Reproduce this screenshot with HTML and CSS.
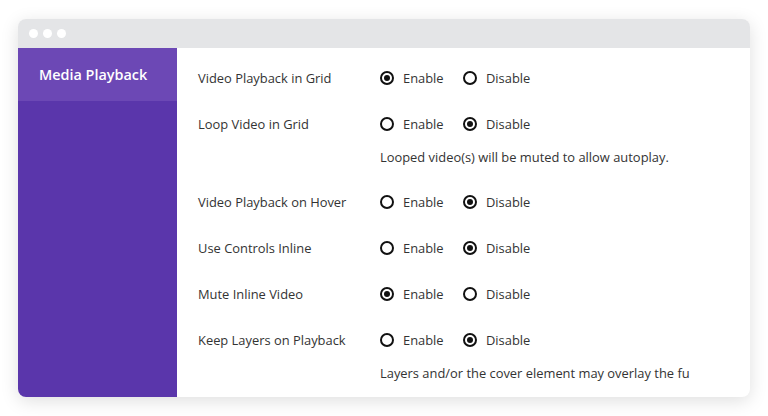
FILE: index.html
```html
<!DOCTYPE html>
<html>
<head>
<meta charset="utf-8">
<link rel="stylesheet" href="styles.css">
</head>
<body>
<div class="window">
  <div class="titlebar">
    <span class="dot"></span><span class="dot"></span><span class="dot"></span>
  </div>
  <div class="main">
    <div class="sidebar">
      <div class="nav-item active">Media Playback</div>
    </div>
    <div class="content">
      <div class="row">
        <div class="label">Video Playback in Grid</div>
        <div class="options">
          <div class="opt"><span class="radio on"></span>Enable</div>
          <div class="opt"><span class="radio"></span>Disable</div>
        </div>
      </div>
      <div class="row">
        <div class="label">Loop Video in Grid</div>
        <div class="options">
          <div class="opt"><span class="radio"></span>Enable</div>
          <div class="opt"><span class="radio on"></span>Disable</div>
        </div>
      </div>
      <div class="note">Looped video(s) will be muted to allow autoplay.</div>
      <div class="row">
        <div class="label">Video Playback on Hover</div>
        <div class="options">
          <div class="opt"><span class="radio"></span>Enable</div>
          <div class="opt"><span class="radio on"></span>Disable</div>
        </div>
      </div>
      <div class="row">
        <div class="label">Use Controls Inline</div>
        <div class="options">
          <div class="opt"><span class="radio"></span>Enable</div>
          <div class="opt"><span class="radio on"></span>Disable</div>
        </div>
      </div>
      <div class="row">
        <div class="label">Mute Inline Video</div>
        <div class="options">
          <div class="opt"><span class="radio on"></span>Enable</div>
          <div class="opt"><span class="radio"></span>Disable</div>
        </div>
      </div>
      <div class="row">
        <div class="label">Keep Layers on Playback</div>
        <div class="options">
          <div class="opt"><span class="radio"></span>Enable</div>
          <div class="opt"><span class="radio on"></span>Disable</div>
        </div>
      </div>
      <div class="note last">Layers and/or the cover element may overlay the fu</div>
    </div>
  </div>
</div>
</body>
</html>
```

FILE: styles.css
```css
html, body {
  margin: 0;
  padding: 0;
  background: #ffffff;
}
body {
  width: 768px;
  height: 416px;
  overflow: hidden;
  font-family: "Open Sans", "Noto Sans", sans-serif;
  color: #333333;
}
.window {
  margin: 19px 0 0 18px;
  width: 732px;
  height: 378px;
  border-radius: 8px;
  box-shadow: 0 4px 18px rgba(0, 0, 0, 0.13);
  overflow: hidden;
  display: flex;
  flex-direction: column;
  background: #ffffff;
}
.titlebar {
  height: 29px;
  background: #e4e5e7;
  display: flex;
  align-items: center;
  padding-left: 11px;
  gap: 5px;
  flex-shrink: 0;
}
.dot {
  width: 9px;
  height: 9px;
  border-radius: 50%;
  background: #ffffff;
}
.main {
  flex: 1;
  display: flex;
}
.sidebar {
  width: 159px;
  background: #5a36ab;
  flex-shrink: 0;
}
.nav-item {
  height: 53px;
  display: flex;
  align-items: center;
  padding-left: 21px;
  padding-bottom: 1px;
  box-sizing: border-box;
  color: #ffffff;
  font-weight: 600;
  font-size: 14.4px;
}
.nav-item.active {
  background: #6c48b5;
}
.content {
  flex: 1;
  padding: 7px 0 0 21px;
  font-size: 12.9px;
}
.row {
  height: 46px;
  display: flex;
  align-items: center;
}
.label {
  width: 182px;
  flex-shrink: 0;
}
.options {
  display: flex;
}
.opt {
  width: 83px;
  display: flex;
  align-items: center;
}
.radio {
  width: 14px;
  height: 14px;
  box-sizing: border-box;
  border: 2px solid #111111;
  border-radius: 50%;
  margin-right: 9px;
  display: flex;
  align-items: center;
  justify-content: center;
}
.radio.on::after {
  content: "";
  width: 6px;
  height: 6px;
  border-radius: 50%;
  background: #111111;
}
.note {
  padding-left: 182px;
  height: 20px;
  line-height: 20px;
  margin-bottom: 12px;
  margin-top: 0;
  white-space: nowrap;
}
.note.last {
  margin-bottom: 0;
}
```
